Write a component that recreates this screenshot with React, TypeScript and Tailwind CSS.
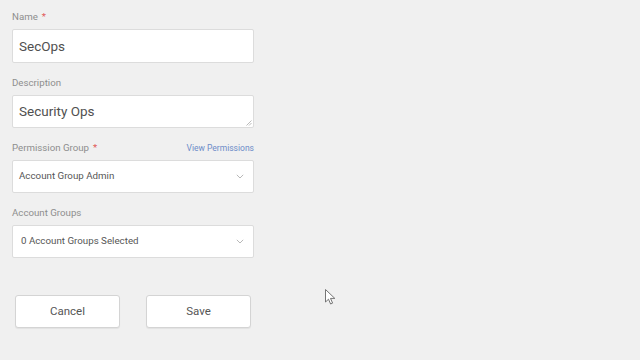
import React from "react";

const Chevron: React.FC = () => (
  <svg width="8" height="5" viewBox="0 0 8 5" fill="none" className="shrink-0">
    <path d="M0.8 0.8l3.2 3.2 3.2-3.2" stroke="#b8b8b8" strokeWidth="1" />
  </svg>
);

interface FieldProps {
  label: string;
  required?: boolean;
  right?: React.ReactNode;
  children: React.ReactNode;
}

const Field: React.FC<FieldProps> = ({ label, required, right, children }) => (
  <div className="flex flex-col">
    <div className="flex items-center justify-between h-[12px] mb-[6px]">
      <span className="text-[9.7px] leading-[12px] text-[#8e8e8e]">
        {label}
        {required && <span className="text-[#e05a5a] ml-[4px]">*</span>}
      </span>
      {right}
    </div>
    {children}
  </div>
);

const App: React.FC = () => {
  return (
    <div
      className="relative w-[640px] h-[360px] bg-[#f0f0f0] overflow-hidden"
      style={{ fontFamily: "Roboto, 'Liberation Sans', sans-serif" }}
    >
      <div className="flex flex-col gap-[14px] w-[242px] ml-[12px] pt-[11px]">
        <Field label="Name" required>
          <div className="h-[34px] bg-white border border-[#dcdcdc] rounded-[2px] flex items-center px-[6px] text-[13.5px] text-[#505050]">
            SecOps
          </div>
        </Field>
        <Field label="Description">
          <div className="relative h-[33px] bg-white border border-[#dcdcdc] rounded-[2px] flex items-center px-[6px] text-[13.5px] text-[#505050]">
            Security Ops
            <svg width="6" height="6" viewBox="0 0 6 6" className="absolute right-[1px] bottom-[1px]">
              <path d="M5.5 0.5L0.5 5.5M5.5 3L3 5.5" stroke="#aaa" strokeWidth="0.8" />
            </svg>
          </div>
        </Field>
        <Field
          label="Permission Group"
          required
          right={<span className="text-[8.5px] leading-[12px] text-[#6d8cc8]">View Permissions</span>}
        >
          <div className="h-[33px] bg-white border border-[#dcdcdc] rounded-[2px] flex items-center justify-between pl-[6px] pr-[9px] text-[9.75px] text-[#555]">
            Account Group Admin
            <Chevron />
          </div>
        </Field>
        <Field label="Account Groups">
          <div className="h-[33px] bg-white border border-[#dcdcdc] rounded-[2px] flex items-center justify-between pl-[8px] pr-[9px] text-[9.75px] text-[#555]">
            0 Account Groups Selected
            <Chevron />
          </div>
        </Field>
      </div>

      <div className="flex gap-[26px] ml-[15px] mt-[37px]">
        <button className="w-[105px] h-[33px] bg-white border border-[#d4d4d4] rounded-[3px] shadow-[0_1px_1px_rgba(0,0,0,0.06)] text-[11.5px] text-[#555]">
          Cancel
        </button>
        <button className="w-[105px] h-[33px] bg-white border border-[#d4d4d4] rounded-[3px] shadow-[0_1px_1px_rgba(0,0,0,0.06)] text-[11.5px] text-[#555]">
          Save
        </button>
      </div>

      <svg width="12" height="17" viewBox="0 0 12 17" className="absolute left-[325px] top-[289px]">
        <path
          d="M0.5 0.5L0.5 13L3.5 10.2L5.6 15L7.6 14.1L5.5 9.4L9.8 9.4Z"
          fill="#fff"
          stroke="#666"
          strokeWidth="0.9"
          strokeLinejoin="round"
        />
      </svg>
    </div>
  );
};

export default App;
